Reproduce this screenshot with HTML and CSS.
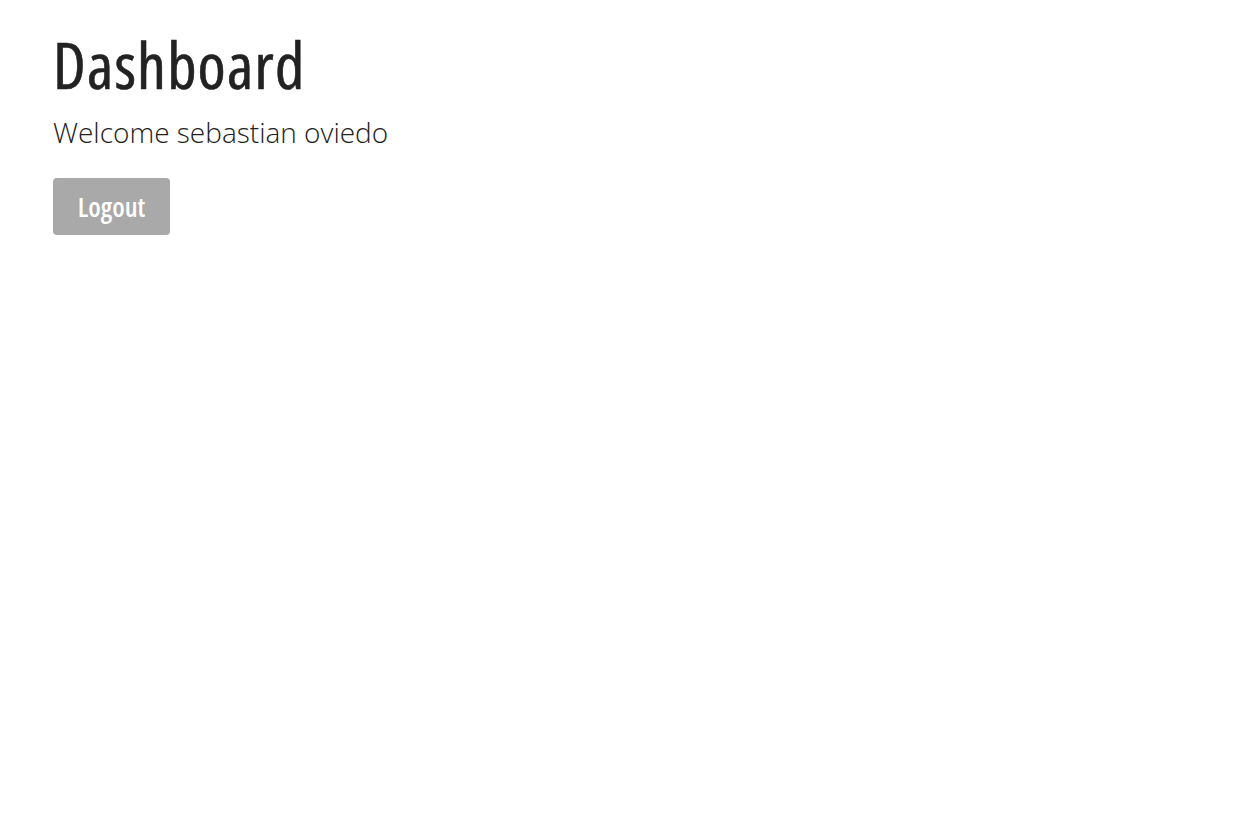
FILE: index.html
```html
<!DOCTYPE html>
<html>
<head>
<meta charset="utf-8">
<link rel="stylesheet" href="styles.css">
</head>
<body>
<main class="page">
  <h1 class="title">Dashboard</h1>
  <p class="welcome">Welcome sebastian oviedo</p>
  <button class="logout">Logout</button>
</main>
</body>
</html>
```
FILE: styles.css
```css
html, body {
  margin: 0;
  padding: 0;
  background: #ffffff;
}
.page {
  padding: 27px 53px;
  display: flex;
  flex-direction: column;
  align-items: flex-start;
}
.title {
  margin: 0;
  font-family: "Open Sans", "Roboto Condensed", sans-serif;
  font-stretch: condensed;
  font-weight: 500;
  font-size: 64px;
  letter-spacing: 1.2px;
  line-height: 76px;
  color: #222222;
  -webkit-text-stroke: 0.6px #222222;
}
.welcome {
  margin: 11px 0 0 0;
  font-family: "Open Sans", sans-serif;
  font-weight: 300;
  font-size: 28px;
  line-height: 36px;
  color: #222222;
}
.logout {
  margin-top: 28px;
  width: 117px;
  height: 57px;
  border: none;
  border-radius: 4px;
  background: #a9a9a9;
  color: #ffffff;
  font-family: "Open Sans", "Roboto Condensed", sans-serif;
  font-stretch: condensed;
  font-weight: 600;
  font-size: 27px;
  padding: 0;
}
```
